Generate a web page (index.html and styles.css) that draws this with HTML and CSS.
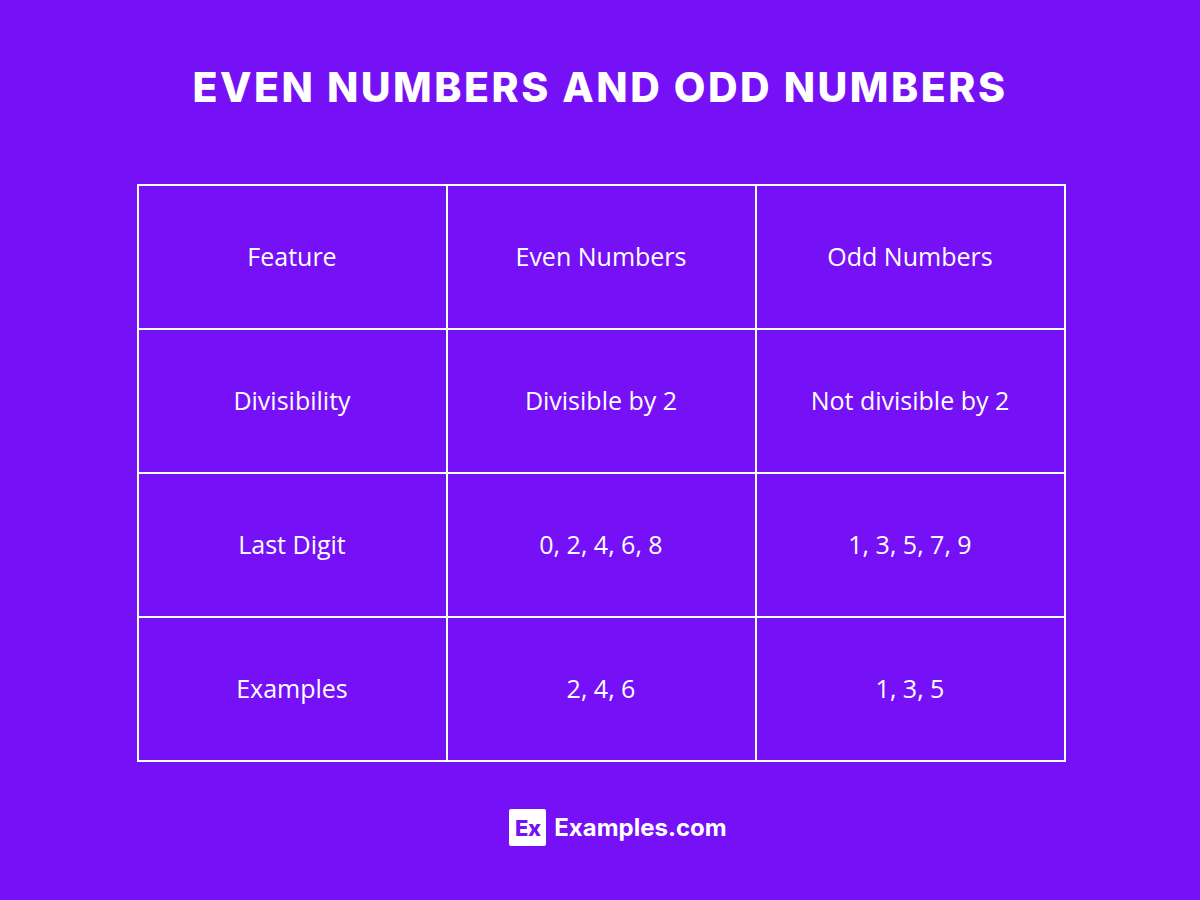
FILE: index.html
```html
<!DOCTYPE html>
<html>
<head>
<meta charset="utf-8">
<link rel="stylesheet" href="styles.css">
</head>
<body>
<div class="page">
  <h1 class="title">EVEN NUMBERS AND ODD NUMBERS</h1>
  <table class="grid">
    <tr><td>Feature</td><td>Even Numbers</td><td>Odd Numbers</td></tr>
    <tr><td>Divisibility</td><td>Divisible by 2</td><td>Not divisible by 2</td></tr>
    <tr><td>Last Digit</td><td>0, 2, 4, 6, 8</td><td>1, 3, 5, 7, 9</td></tr>
    <tr><td>Examples</td><td>2, 4, 6</td><td>1, 3, 5</td></tr>
  </table>
  <div class="brand">
    <span class="logo">Ex</span>
    <span class="brand-name">Examples.com</span>
  </div>
</div>
</body>
</html>
```
FILE: styles.css
```css
html, body {
  margin: 0;
  padding: 0;
  background: #7510f7;
}
.page {
  width: 1200px;
  height: 900px;
  display: flex;
  flex-direction: column;
  align-items: center;
  color: #ffffff;
  font-family: "Open Sans", "Liberation Sans", sans-serif;
}
.title {
  margin: 62px 0 0 0;
  font-family: "Inter", "Liberation Sans", sans-serif;
  font-weight: 800;
  font-size: 41px;
  line-height: 50px;
  letter-spacing: 2.5px;
}
.grid {
  margin-top: 72px;
  margin-left: 2px;
  border-collapse: collapse;
  border: 2px solid #ffffff;
}
.grid td {
  width: 307px;
  height: 140px;
  padding: 0 0 2px 0;
  border: 2px solid #ffffff;
  text-align: center;
  vertical-align: middle;
  font-size: 25px;
  font-weight: 400;
}
.brand {
  margin-top: 47px;
  margin-left: 36px;
  display: flex;
  align-items: center;
  gap: 8px;
}
.logo {
  width: 37px;
  height: 37px;
  background: #ffffff;
  border-radius: 2px;
  color: #7510f7;
  font-family: "Inter", "Liberation Sans", sans-serif;
  font-weight: 800;
  font-size: 22px;
  display: flex;
  align-items: center;
  justify-content: center;
  letter-spacing: -0.5px;
}
.brand-name {
  font-family: "Inter", "Liberation Sans", sans-serif;
  font-weight: 700;
  font-size: 24px;
}
```
